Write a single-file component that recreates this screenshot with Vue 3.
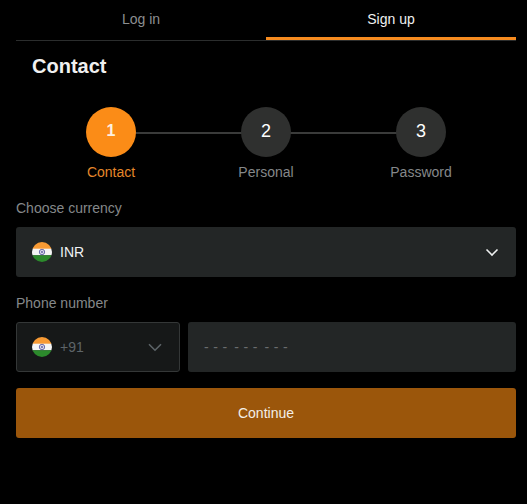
<script setup>
const steps = [
  { n: 1, label: 'Contact', active: true },
  { n: 2, label: 'Personal', active: false },
  { n: 3, label: 'Password', active: false },
]
</script>

<template>
  <div class="page">
    <div class="tabs">
      <div class="tab">Log in</div>
      <div class="tab on">Sign up</div>
    </div>
    <h1 class="title">Contact</h1>
    <div class="stepper">
      <div class="line"></div>
      <div v-for="s in steps" :key="s.n" class="step" :class="{ active: s.active }">
        <div class="dot">{{ s.n }}</div>
        <div class="lab">{{ s.label }}</div>
      </div>
    </div>
    <div class="label first">Choose currency</div>
    <div class="field select">
      <svg class="flag" viewBox="0 0 20 20">
        <defs><clipPath id="c1"><circle cx="10" cy="10" r="10" /></clipPath></defs>
        <g clip-path="url(#c1)">
          <rect width="20" height="7" fill="#f79a34" />
          <rect y="6.7" width="20" height="6.6" fill="#f5f5f5" />
          <rect y="13.3" width="20" height="6.7" fill="#2c8a2c" />
        </g>
        <circle cx="10" cy="10" r="2.7" fill="#d5d5e8" stroke="#6060a4" stroke-width="0.9" />
        <circle cx="10" cy="10" r="0.9" fill="#5a5a9c" />
      </svg>
      <span class="val">INR</span>
      <svg class="chev" viewBox="0 0 14 9"><path d="M1.5 1.5 7 7 12.5 1.5" fill="none" stroke="#eef0f0" stroke-width="1.6" /></svg>
    </div>
    <div class="label second">Phone number</div>
    <div class="phone">
      <div class="code">
        <svg class="flag" viewBox="0 0 20 20">
          <defs><clipPath id="c2"><circle cx="10" cy="10" r="10" /></clipPath></defs>
          <g clip-path="url(#c2)">
            <rect width="20" height="7" fill="#f79a34" />
            <rect y="6.7" width="20" height="6.6" fill="#f5f5f5" />
            <rect y="13.3" width="20" height="6.7" fill="#2c8a2c" />
          </g>
          <circle cx="10" cy="10" r="2.7" fill="#d5d5e8" stroke="#6060a4" stroke-width="0.9" />
          <circle cx="10" cy="10" r="0.9" fill="#5a5a9c" />
        </svg>
        <span class="dial">+91</span>
        <svg class="chev" viewBox="0 0 14 9"><path d="M1 1.2 7 7.2 13 1.2" fill="none" stroke="#5d6468" stroke-width="1.6" /></svg>
      </div>
      <div class="field num"><span class="ph">--- --- ---</span></div>
    </div>
    <button class="go">Continue</button>
  </div>
</template>

<style>
html, body { background: #000; margin: 0; }
</style>

<style scoped>
.page {
  box-sizing: border-box;
  width: 527px;
  height: 504px;
  padding: 0 11px 0 16px;
  background: #000;
  font-family: "Liberation Sans", Arial, sans-serif;
  font-size: 14px;
  color: #fff;
  overflow: hidden;
}
.tabs { display: flex; height: 41px; border-bottom: 1px solid #2b2d2d; box-sizing: border-box; }
.tab {
  flex: 1;
  height: 40px;
  box-sizing: border-box;
  padding-top: 11px;
  line-height: 16px;
  text-align: center;
  color: #8c8f91;
}
.tab.on { color: #f0f0f0; border-bottom: 3px solid #f68b1f; }
.title {
  margin: 13px 0 0 16px;
  font-size: 20px;
  line-height: 24px;
  font-weight: 700;
  color: #f0f0f0;
}
.stepper {
  position: relative;
  display: flex;
  justify-content: space-between;
  width: 390px;
  margin: 29px 0 0 55px;
}
.line { position: absolute; left: 40px; right: 40px; top: 25px; height: 2px; background: #3a3b3a; }
.step { position: relative; width: 80px; display: flex; flex-direction: column; align-items: center; }
.dot {
  width: 50px;
  height: 50px;
  border-radius: 50%;
  background: #2f302f;
  color: #fff;
  font-size: 18px;
  line-height: 48px;
  text-align: center;
}
.active .dot { background: #fb8c17; color: #fdf0e0; font-size: 16px; font-weight: 700; }
.lab { margin-top: 7px; line-height: 16px; color: #85888a; white-space: nowrap; }
.active .lab { color: #e5872a; }
.label { color: #85888a; line-height: 16px; }
.label.first { margin-top: 20px; }
.label.second { margin-top: 18px; }
.field { box-sizing: border-box; height: 50px; background: #232626; border-radius: 3px; display: flex; align-items: center; }
.select { margin-top: 11px; padding: 0 17px 0 16px; }
.flag { width: 20px; height: 20px; flex: none; }
.val { margin-left: 8px; flex: 1; color: #f0f2f5; }
.chev { width: 14px; height: 9px; flex: none; }
.phone { margin-top: 11px; display: flex; gap: 8px; }
.code {
  box-sizing: border-box;
  width: 164px;
  height: 50px;
  flex: none;
  display: flex;
  align-items: center;
  padding: 0 17px 0 15px;
  background: #161818;
  border: 1px solid #343737;
  border-radius: 3px;
}
.dial { margin-left: 8px; flex: 1; color: #5d6468; }
.num { flex: 1; padding: 0 16px; }
.ph { color: #6a6d6e; letter-spacing: 4.6px; word-spacing: -6px; font-size: 14px; }
.go {
  display: block;
  width: 100%;
  height: 50px;
  margin-top: 16px;
  border: none;
  border-radius: 3px;
  background: #9b560b;
  color: #f3efe8;
  font: 14px "Liberation Sans", Arial, sans-serif;
}
</style>
